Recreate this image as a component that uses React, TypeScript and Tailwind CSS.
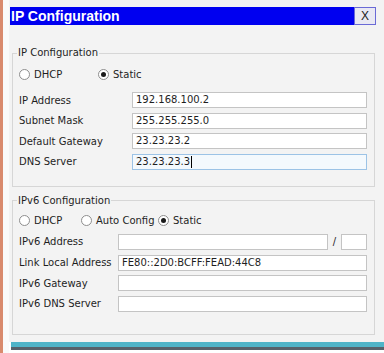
import React from 'react';

type Field = { label: string; value?: string; focused?: boolean; prefix?: boolean };

const ipv4Fields: Field[] = [
    { label: 'IP Address', value: '192.168.100.2' },
    { label: 'Subnet Mask', value: '255.255.255.0' },
    { label: 'Default Gateway', value: '23.23.23.2' },
    { label: 'DNS Server', value: '23.23.23.3', focused: true },
];

const ipv6Fields: Field[] = [
    { label: 'IPv6 Address', prefix: true },
    { label: 'Link Local Address', value: 'FE80::2D0:BCFF:FEAD:44C8' },
    { label: 'IPv6 Gateway' },
    { label: 'IPv6 DNS Server' },
];

function Radio({ label, checked, width }: { label: string; checked?: boolean; width: string }) {
    return (
        <div className={`flex items-center gap-[4px] ${width}`}>
            <span className="flex h-[11px] w-[11px] items-center justify-center rounded-full border border-[#8e8e8e] bg-white">
                {checked && <span className="h-[5px] w-[5px] rounded-full bg-[#1a1a1a]" />}
            </span>
            <span>{label}</span>
        </div>
    );
}

function TextBox({ value, focused, className = '' }: { value?: string; focused?: boolean; className?: string }) {
    return (
        <div className={`flex h-[16px] items-center border px-[3px] leading-[14px] ${focused ? 'border-[#9cc3e6] bg-[#f4f9fd]' : 'border-[#c4c4c4] bg-white'} ${className}`}>
            <span>{value}</span>
            {focused && <span className="ml-[1px] h-[12px] w-[1px] bg-black" />}
        </div>
    );
}

function Group({ title, children, className = '' }: { title: string; children: React.ReactNode; className?: string }) {
    return (
        <fieldset className={`ml-[3px] mr-[9px] border border-[#d6d6d6] pl-[6px] pr-[7px] ${className}`}>
            <legend className="ml-[-2px] px-[1px] leading-[12px]">{title}</legend>
            {children}
        </fieldset>
    );
}

export default function App() {
    return (
        <div className="flex h-[353px] w-[384px] overflow-hidden bg-white font-['DejaVu_Sans',sans-serif] text-[10px] text-[#1e1e1e]">
            <div className="w-[3px] bg-[#d98a6d]" />
            <div className="w-[6px] bg-[#fafafa]" />
            <div className="flex flex-1 flex-col">
                <div className="flex flex-col bg-[#f3f3f3] pt-[7px]">
                    <div className="ml-[1px] mr-[8px] flex h-[18px]">
                        <div className="flex flex-1 items-center bg-[#0000f0] pl-[1px] font-['Liberation_Sans',Arial,sans-serif] text-[14px] font-bold text-white">IP Configuration</div>
                        <div className="flex w-[22px] items-center justify-center border border-[#6a6ad6] bg-[#e9e9f3] font-['Liberation_Sans',Arial,sans-serif] text-[12px] text-[#222]">X</div>
                    </div>

                    <Group title="IP Configuration" className="mt-[22px] pb-[16px]">
                        <div className="mt-[9px] flex h-[12px] items-center">
                            <Radio label="DHCP" width="w-[79px]" />
                            <Radio label="Static" checked width="w-[80px]" />
                        </div>
                        <div className="mt-[12px] flex flex-col gap-[4.67px]">
                            {ipv4Fields.map(field => (
                                <div key={field.label} className="flex items-center">
                                    <span className="w-[113px]">{field.label}</span>
                                    <TextBox value={field.value} focused={field.focused} className="flex-1" />
                                </div>
                            ))}
                        </div>
                    </Group>

                    <Group title="IPv6 Configuration" className="mt-[8px] pb-[22px]">
                        <div className="mt-[8px] flex h-[12px] items-center">
                            <Radio label="DHCP" width="w-[62px]" />
                            <Radio label="Auto Config" width="w-[77px]" />
                            <Radio label="Static" checked width="w-[60px]" />
                        </div>
                        <div className="mt-[7px] flex flex-col gap-[4.67px]">
                            {ipv6Fields.map(field => (
                                <div key={field.label} className="flex items-center">
                                    <span className="w-[99px]">{field.label}</span>
                                    {field.prefix ? (
                                        <div className="flex flex-1 items-center">
                                            <TextBox className="flex-1" />
                                            <span className="w-[13px] text-center">/</span>
                                            <TextBox className="w-[26px]" />
                                        </div>
                                    ) : (
                                        <TextBox value={field.value} className="flex-1" />
                                    )}
                                </div>
                            ))}
                        </div>
                    </Group>
                    <div className="h-[7px]" />
                </div>
                <div className="ml-[2px] h-[5px] bg-[#4fb4c8]" />
                <div className="ml-[2px] h-[3px] bg-[#56616a]" />
            </div>
        </div>
    );
}
